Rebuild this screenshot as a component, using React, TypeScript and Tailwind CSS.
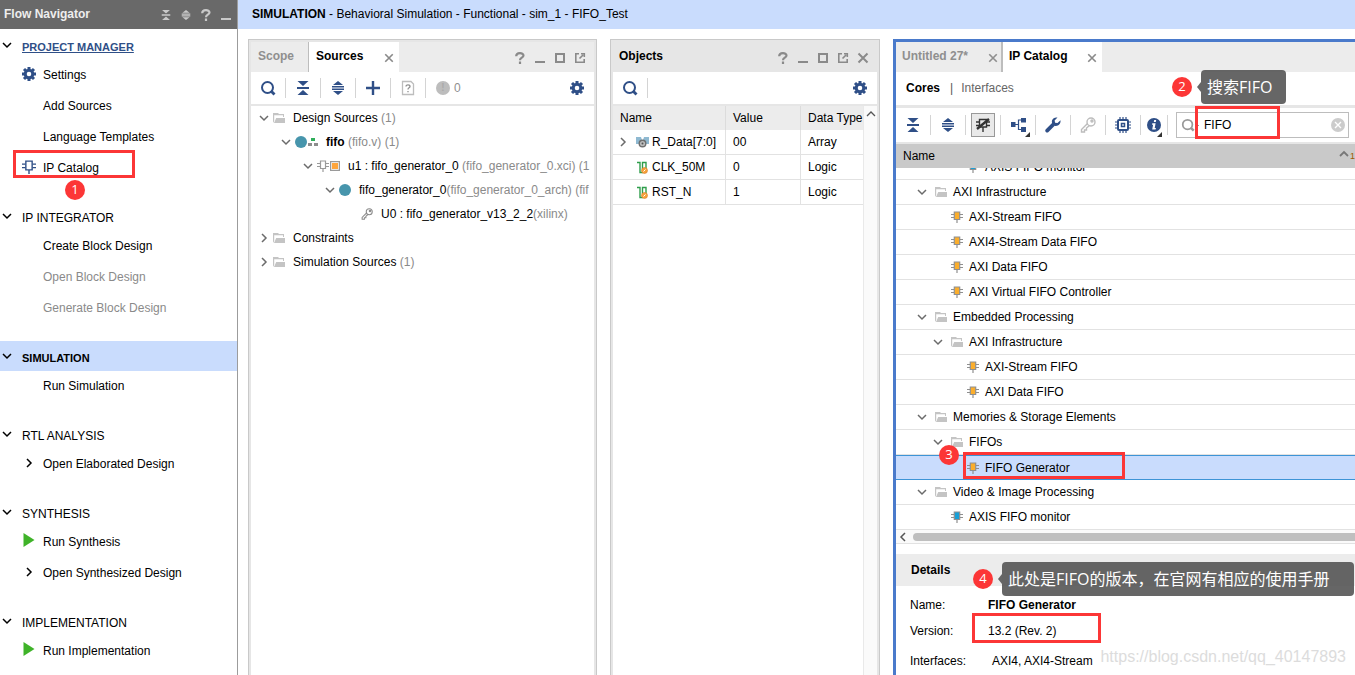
import React from 'react';

type IconProps = { className?: string };

const Chevron: React.FC<{ open?: boolean; className?: string }> = ({ open, className = 'text-[#6b6b6b]' }) => (
  <svg viewBox="0 0 14 14" className={`size-3.5 shrink-0 ${className}`} fill="none" stroke="currentColor" strokeWidth="1.5">
    {open ? <path d="M3 5l4 4 4-4" /> : <path d="M5 3l4 4-4 4" />}
  </svg>
);

const Gear: React.FC<IconProps> = ({ className = '' }) => (
  <svg viewBox="0 0 14 14" className={`size-3.5 shrink-0 text-[#2f4f87] ${className}`} fill="none" stroke="currentColor">
    <circle cx="7" cy="7" r="3.8" strokeWidth="3" />
    <g strokeWidth="3">
      <path d="M7 0v2.5M7 11.5V14M0 7h2.5M11.5 7H14" />
      <path d="M2 2l1.8 1.8M10.2 10.2L12 12M12 2l-1.8 1.8M3.8 10.2L2 12" />
    </g>
  </svg>
);

const Search: React.FC<IconProps> = ({ className = 'size-4 text-[#2f4f87]' }) => (
  <svg viewBox="0 0 16 16" className={`shrink-0 ${className}`} fill="none" stroke="currentColor">
    <circle cx="7.5" cy="7.5" r="5.5" strokeWidth="2" />
    <path d="M11 11l3.5 3.5" strokeWidth="2.8" />
  </svg>
);

const CollapseAll: React.FC<IconProps> = ({ className = 'size-3.5 text-[#2f4f87]' }) => (
  <svg viewBox="0 0 14 14" className={`shrink-0 ${className}`} fill="currentColor">
    <path d="M1.500 0h11L7 5zM1 6h12v2H1zM7 9l5.500 5h-11z" />
  </svg>
);

const ExpandAll: React.FC<IconProps> = ({ className = 'size-3.5 text-[#2f4f87]' }) => (
  <svg viewBox="0 0 14 14" className={`shrink-0 ${className}`} fill="currentColor">
    <path d="M7 0l5 4H2zM1 5h12v1.600H1zM1 7.500h12v1.600H1zM2 10h10l-5 4z" />
  </svg>
);

const Plus: React.FC = () => (
  <svg viewBox="0 0 14 14" className="size-3.5" fill="none" stroke="#2f4f87" strokeWidth="2.4">
    <path d="M7 0v14M0 7h14" />
  </svg>
);

const DocHelp: React.FC = () => (
  <svg viewBox="0 0 14 16" className="h-4 w-3.5" fill="none" stroke="#bdbdbd" strokeWidth="1.3">
    <path d="M1.500 1.500H10l2.500 2.500v10.500h-11z" />
    <path d="M5 6.500c0-2.300 4-2.300 4 0 0 1.400-2 1.300-2 3M7 11v1.300" stroke="#8f8f8f" />
  </svg>
);

const Folder: React.FC = () => (
  <svg viewBox="0 0 12 12" className="size-3 shrink-0" fill="#c4c4c4">
    <path d="M0 1h5l1 1h5v3h-1V3.200H1.200V9L0 11z" />
    <path d="M3.200 6H12v5H1z" />
  </svg>
);

const Chip: React.FC<{ fill?: string; line?: string; className?: string }> = ({ fill = 'none', line = '#8f8f8f', className = 'size-3' }) => (
  <svg viewBox="0 0 12 12" className={`shrink-0 ${className}`} fill="none" stroke={line} strokeWidth="1.2">
    <path d="M0 3.500h3M0 6.500h3M9 3.500h3M9 6.500h3M6 8.500V12" />
    <path d="M3.300 1h5.400v7.500H3.300z" fill={fill} />
  </svg>
);

const ChipOff: React.FC = () => (
  <svg viewBox="0 0 14 14" className="size-3.5" fill="none" stroke="#333" strokeWidth="1.400">
    <path d="M0 4h3M0 7.500h3M11 4h3M11 7.500h3M7 9v5M3.500 1.500h7V9h-7z" />
    <path d="M1 11L13 1" strokeWidth="2.400" />
  </svg>
);

const Hierarchy: React.FC = () => (
  <svg viewBox="0 0 16 16" className="size-4" fill="#2f4f87">
    <path d="M1 5h4.500v5H1zM11 1h5v4.500h-5zM11 10h5v5h-5z" />
    <path d="M5 7.500h3M13 3H8.500v9.500H13" fill="none" stroke="#2f4f87" strokeWidth="1.200" />
  </svg>
);

const Wrench: React.FC = () => (
  <svg viewBox="0 0 16 16" className="size-4" fill="#2f4f87">
    <path d="M15.500 3.300l-3 2.800-2.400-.3-.5-2.300L12.500.6C10.300.1 7.800 1 7 3.500c-.3 1 0 1.800.1 2.600L.8 12.300c-.8.8-.7 1.900 0 2.600.8.800 1.900.800 2.700 0l6.200-6.200c3.300.9 6.300-1.700 5.800-5.400z" />
  </svg>
);

const Key: React.FC<IconProps> = ({ className = 'size-4 text-[#bcbcbc]' }) => (
  <svg viewBox="0 0 16 16" className={`shrink-0 ${className}`} fill="none" stroke="currentColor" strokeWidth="1.400">
    <circle cx="11" cy="5" r="4" />
    <circle cx="12" cy="4" r="1" />
    <path d="M7.500 6.500L1.500 12.500V15h3v-2H6.500v-2L9.500 8.500" />
  </svg>
);

const Processor: React.FC = () => (
  <svg viewBox="0 0 16 16" className="size-4" fill="none" stroke="#2f4f87">
    <rect x="3" y="3" width="10" height="10" rx="1" strokeWidth="2" />
    <rect x="6.500" y="6.500" width="3" height="3" strokeWidth="1.500" />
    <path d="M5 0v3M8 0v3M11 0v3M5 13v3M8 13v3M11 13v3M0 5h3M0 8h3M0 11h3M13 5h3M13 8h3M13 11h3" strokeWidth="1.200" />
  </svg>
);

const Info: React.FC = () => (
  <svg viewBox="0 0 16 16" className="size-4">
    <circle cx="8" cy="8" r="7" fill="#2f4f87" />
    <path d="M8.200 3h2l-.4 2h-2zM6.300 6.300h3.300L8.700 11h1.200l-.3 1.400H6.200l.9-4.700H6z" fill="#fff" />
  </svg>
);

const Help: React.FC = () => (
  <svg viewBox="0 0 10 12" className="h-3 w-2.5" fill="none" stroke="currentColor" strokeWidth="2.200">
    <path d="M1.200 4.200c0-4 7.300-4 7.300-.6C8.500 5.800 5 5.600 5 8.200M5 9.600V12" />
  </svg>
);

const Minimize: React.FC = () => (
  <svg viewBox="0 0 12 12" className="size-3" fill="currentColor"><path d="M1 9h10v2H1z" /></svg>
);

const Maximize: React.FC = () => (
  <svg viewBox="0 0 12 12" className="size-3" fill="none" stroke="currentColor" strokeWidth="2">
    <path d="M2 2h8v8H2z" />
  </svg>
);

const PopOut: React.FC = () => (
  <svg viewBox="0 0 12 12" className="size-3" fill="none" stroke="currentColor" strokeWidth="1.600">
    <path d="M5 1.800H1.800v8.400h8.400V7M5.500 6.500L9 3M7 1.700h3.300V5" />
  </svg>
);

const Close: React.FC<{ className?: string }> = ({ className = 'size-3' }) => (
  <svg viewBox="0 0 12 12" className={className} fill="none" stroke="currentColor" strokeWidth="2">
    <path d="M1.500 1.500l9 9M10.500 1.500l-9 9" />
  </svg>
);

const Play: React.FC = () => (
  <svg viewBox="0 0 12 14" className="mb-0.5 h-3.5 w-3" fill="#3fb329"><path d="M.5 0L11.500 7 .5 14z" /></svg>
);

const Module: React.FC = () => (
  <svg viewBox="0 0 12 12" className="size-3 shrink-0" fill="#4795ac"><circle cx="6" cy="6" r="6" /></svg>
);

const TopModule: React.FC = () => (
  <svg viewBox="0 0 23 12" className="h-3 w-[23px] shrink-0">
    <circle cx="6" cy="6" r="6" fill="#4795ac" />
    <path d="M16 2h4v3h-4z" fill="#2fae5a" />
    <path d="M13 7h4v3h-4zM19 7h4v3h-4z" fill="#8d8d8d" />
  </svg>
);

const IpInstance: React.FC = () => (
  <svg viewBox="0 0 23 12" className="h-3 w-[23px] shrink-0" fill="none" stroke="#9a9a9a" strokeWidth="1.200">
    <path d="M0 3.500h3M0 6.500h3M9 3.500h3M9 6.500h3M6 8.500V12M3.500 1h5v7.500h-5z" />
    <path d="M13.600 1.600h8.800v8.800h-8.800z" />
    <path d="M15.500 3.500h5v5h-5z" fill="#ffa63d" stroke="#ffa63d" />
  </svg>
);

const BusSignal: React.FC = () => (
  <svg viewBox="0 0 13 12" className="h-3 w-[13px] shrink-0">
    <path d="M0 1h5l1 3h1l1-3h5v7H0z" fill="#8fb9d1" />
    <circle cx="6.500" cy="7.500" r="3.300" fill="#bbb" stroke="#6f6f6f" strokeWidth="1.400" />
    <circle cx="6.500" cy="7.500" r="1" fill="#555" />
  </svg>
);

const Signal: React.FC = () => (
  <svg viewBox="0 0 13 13" className="size-[13px] shrink-0" fill="none">
    <path d="M1 1.500h3v10h3M6.500 8V1.500H10V8" stroke="#2f9e4b" strokeWidth="1.400" />
    <circle cx="8.500" cy="9.500" r="3" fill="#f7a23b" stroke="#d9822b" strokeWidth=".6" />
    <path d="M7.500 10.500l2-2" stroke="#fff" />
  </svg>
);

const IconCell: React.FC<{ label: string; children: React.ReactNode }> = ({ label, children }) => (
  <div className="flex h-5 w-[35px] shrink-0 border-r border-[#d4d4d4]">
    <button aria-label={label} className="flex flex-1 items-center justify-center">{children}</button>
  </div>
);

const WindowButtons: React.FC<{ closable?: boolean }> = ({ closable }) => (
  <div className="ml-auto flex pr-1 pt-0.5 text-[#8a8a8a]">
    <button aria-label="Help" className="flex w-5 justify-center"><Help /></button>
    <button aria-label="Minimize" className="flex w-5 justify-center"><Minimize /></button>
    <button aria-label="Maximize" className="flex w-5 justify-center"><Maximize /></button>
    <button aria-label="Float" className="flex w-5 justify-center"><PopOut /></button>
    {closable && <button aria-label="Close" className="flex w-5 justify-center"><Close /></button>}
  </div>
);

const Badge: React.FC<{ n: number; className: string }> = ({ n, className }) => (
  <span className={`absolute z-20 flex size-5 items-center justify-center rounded-full bg-[#fc3636] font-['Open_Sans',sans-serif] text-[13px] text-white ${className}`}>
    {n}
  </span>
);

const Callout: React.FC<{ text: string; className: string }> = ({ text, className }) => (
  <div className={`absolute z-20 flex h-[34px] items-center whitespace-nowrap rounded-sm bg-[#555]/90 pl-1.5 font-['Open_Sans','Noto_Sans_CJK_SC',sans-serif] text-base text-white ${className}`}>
    <span className="absolute -left-1 top-3 border-y-5 border-r-4 border-y-transparent border-r-[#666]" />
    {text}
  </div>
);

type NavItem = { label: string; icon?: React.ReactNode; disabled?: boolean; marked?: boolean };
type NavSection = { title: string; items: NavItem[]; link?: boolean; active?: boolean };

const sections: NavSection[] = [
  {
    title: 'PROJECT MANAGER',
    link: true,
    items: [
      { label: 'Settings', icon: <Gear /> },
      { label: 'Add Sources' },
      { label: 'Language Templates' },
      { label: 'IP Catalog', icon: <Chip line="#2f4f87" className="size-3.5" />, marked: true },
    ],
  },
  {
    title: 'IP INTEGRATOR',
    items: [
      { label: 'Create Block Design' },
      { label: 'Open Block Design', disabled: true },
      { label: 'Generate Block Design', disabled: true },
    ],
  },
  { title: 'SIMULATION', active: true, items: [{ label: 'Run Simulation' }] },
  { title: 'RTL ANALYSIS', items: [{ label: 'Open Elaborated Design', icon: <Chevron className="text-black" /> }] },
  {
    title: 'SYNTHESIS',
    items: [
      { label: 'Run Synthesis', icon: <Play /> },
      { label: 'Open Synthesized Design', icon: <Chevron className="text-black" /> },
    ],
  },
  { title: 'IMPLEMENTATION', items: [{ label: 'Run Implementation', icon: <Play /> }] },
];

const FlowNavigator: React.FC = () => (
  <aside className="w-[238px] shrink-0 border-r border-[#9c9c9c]">
    <header className="flex h-[29px] items-center bg-[#696969] pl-1 pr-px text-[#c9c9c9]">
      <h2 className="pb-0.5 text-xs font-bold text-[#eee]">Flow Navigator</h2>
      <div className="ml-auto flex items-center">
        <button aria-label="Collapse all" className="flex w-5 justify-center"><CollapseAll className="size-2.5" /></button>
        <button aria-label="Expand all" className="flex w-5 justify-center"><ExpandAll className="size-2.5" /></button>
        <button aria-label="Help" className="flex w-5 justify-center"><Help /></button>
        <button aria-label="Minimize" className="flex w-5 justify-center"><Minimize /></button>
      </div>
    </header>
    <nav className="flex flex-col gap-[17px] pt-px">
      {sections.map((section) => (
        <section key={section.title}>
          <h3 className={`flex h-[30px] items-center pt-1 ${section.active ? 'bg-[#c9dcfd] text-[11px] font-bold' : ''}`}>
            <Chevron open className="mb-1 mr-2 text-black" />
            {section.link ? <a href="#" className="text-[11px] font-bold text-[#2f4f87] underline">{section.title}</a> : section.title}
          </h3>
          <ul>
            {section.items.map((item) => (
              <li key={item.label} className="relative flex h-[31px] items-center pb-0.5">
                <button disabled={item.disabled} className="flex items-center disabled:text-[#8a8a8a]">
                  <span className="ml-[22px] mr-[7px] flex w-3.5 justify-center pb-0.5">{item.icon}</span>
                  {item.label}
                </button>
                {item.marked && (
                  <>
                    <span className="absolute -top-[3px] left-[13px] h-7 w-[122px] border-3 border-[#fc3636]" />
                    <Badge n={1} className="left-[65px] top-[27px]" />
                  </>
                )}
              </li>
            ))}
          </ul>
        </section>
      ))}
    </nav>
  </aside>
);

type SourceRow = { indent: string; icon: React.ReactNode; name: string; note?: string; open?: boolean; leaf?: boolean; bold?: boolean };

const sources: SourceRow[] = [
  { indent: 'pl-1.5', icon: <Folder />, name: 'Design Sources', note: ' (1)', open: true },
  { indent: 'pl-7', icon: <TopModule />, name: 'fifo', note: ' (fifo.v) (1)', open: true, bold: true },
  { indent: 'pl-[50px]', icon: <IpInstance />, name: 'u1 : fifo_generator_0', note: ' (fifo_generator_0.xci) (1', open: true },
  { indent: 'pl-[72px]', icon: <Module />, name: 'fifo_generator_0', note: '(fifo_generator_0_arch) (fif', open: true },
  { indent: 'pl-[94px]', icon: <Key className="size-3 text-[#8a8a8a]" />, name: 'U0 : fifo_generator_v13_2_2', note: '(xilinx)', leaf: true },
  { indent: 'pl-1.5', icon: <Folder />, name: 'Constraints' },
  { indent: 'pl-1.5', icon: <Folder />, name: 'Simulation Sources', note: ' (1)' },
];

const SourcesPanel: React.FC = () => (
  <section className="flex w-[349px] shrink-0 border border-b-0 border-[#c9c9c9]">
    <div className="flex min-w-0 flex-1 flex-col border-2 border-b-0 border-[#e6e6e6] bg-white">
      <div className="flex h-[30px] items-center bg-[#ececec]">
        <button className="w-[57px] pb-0.5 pl-[7px] text-left font-bold text-[#8f8f8f]">Scope</button>
        <div className="flex h-full w-[91px] items-center border-l border-[#bdbdbd] bg-white pl-[7px]">
          <span className="flex-1 pb-0.5 font-bold">Sources</span>
          <button aria-label="Close Sources" className="pr-[5px] pt-0.5 text-[#8a8a8a]"><Close className="size-2.5" /></button>
        </div>
        <WindowButtons />
      </div>
      <div className="flex h-[34px] items-center border-b-2 border-[#e6e6e6]">
        <IconCell label="Search"><Search /></IconCell>
        <IconCell label="Collapse all"><CollapseAll /></IconCell>
        <IconCell label="Expand all"><ExpandAll /></IconCell>
        <IconCell label="Add sources"><Plus /></IconCell>
        <IconCell label="Properties"><DocHelp /></IconCell>
        <div className="flex items-center gap-1 pl-2.5 text-[#8f8f8f]">
          <span className="flex size-3.5 items-center justify-center rounded-full bg-[#bdbdbd] text-[10px] font-bold text-[#aaa]">!</span>
          0
        </div>
        <button aria-label="Settings" className="ml-auto pr-2.5"><Gear /></button>
      </div>
      <ul>
        {sources.map((row) => (
          <li key={row.name} className={`flex h-6 items-center overflow-hidden whitespace-pre ${row.indent}`}>
            {row.leaf ? <span className="w-3.5" /> : <Chevron open={row.open} />}
            <span className="ml-0.5 mr-2 flex shrink-0">{row.icon}</span>
            <span className={row.bold ? 'font-bold' : ''}>{row.name}</span>
            <span className="text-[#8a8a8a]">{row.note}</span>
          </li>
        ))}
      </ul>
    </div>
  </section>
);

const objects = [
  { name: 'R_Data[7:0]', value: '00', type: 'Array', bus: true },
  { name: 'CLK_50M', value: '0', type: 'Logic' },
  { name: 'RST_N', value: '1', type: 'Logic' },
];

const ObjectsPanel: React.FC = () => (
  <section className="flex w-[270px] shrink-0 border border-b-0 border-[#c9c9c9]">
    <div className="flex min-w-0 flex-1 flex-col border-2 border-b-0 border-[#e6e6e6] bg-white">
      <div className="flex h-[30px] items-center bg-[#e6e6e6]">
        <h2 className="pb-0.5 pl-1.5 font-bold">Objects</h2>
        <WindowButtons closable />
      </div>
      <div className="flex h-[34px] items-center border-b-2 border-[#e6e6e6]">
        <IconCell label="Search"><Search /></IconCell>
        <button aria-label="Settings" className="ml-auto pr-2.5"><Gear /></button>
      </div>
      <div className="flex flex-1">
        <div className="flex-1">
          <table className="w-full table-fixed border-separate border-spacing-0 text-left">
            <colgroup>
              <col className="w-[113px]" />
              <col className="w-[75px]" />
              <col />
            </colgroup>
            <thead>
              <tr className="h-6 bg-[#ececec]">
                <th className="border-r border-[#dcdcdc] pl-[7px] font-normal">Name</th>
                <th className="border-r border-[#dcdcdc] pl-[7px] font-normal">Value</th>
                <th className="whitespace-nowrap pl-[7px] font-normal">Data Type</th>
              </tr>
            </thead>
            <tbody>
              {objects.map((o) => (
                <tr key={o.name} className="h-[25px]">
                  <td className="border-b border-r border-[#e2e2e2]">
                    <div className="flex items-center pl-[3px]">
                      {o.bus ? <Chevron /> : <span className="w-3.5" />}
                      <span className="ml-1.5 mr-[3px] flex">{o.bus ? <BusSignal /> : <Signal />}</span>
                      {o.name}
                    </div>
                  </td>
                  <td className="border-b border-r border-[#e2e2e2] pl-[7px]">{o.value}</td>
                  <td className="border-b border-[#e2e2e2] pl-[7px]">{o.type}</td>
                </tr>
              ))}
            </tbody>
          </table>
        </div>
        <div className="flex w-3.5 justify-center border-l border-[#e9e9e9] bg-[#fafafa] pt-1 text-[#555]">
          <svg viewBox="0 0 10 8" className="h-2 w-2.5" fill="none" stroke="currentColor" strokeWidth="1.300"><path d="M1 6l4-4 4 4" /></svg>
        </div>
      </div>
    </div>
  </section>
);

type Core = { indent: string; name: string; folder?: boolean; fill?: string; selected?: boolean };

const cores: Core[] = [
  { indent: 'pl-[51px]', name: 'AXIS FIFO monitor', fill: '#18a0d8' },
  { indent: 'pl-[19px]', name: 'AXI Infrastructure', folder: true },
  { indent: 'pl-[35px]', name: 'AXI-Stream FIFO' },
  { indent: 'pl-[35px]', name: 'AXI4-Stream Data FIFO' },
  { indent: 'pl-[35px]', name: 'AXI Data FIFO' },
  { indent: 'pl-[35px]', name: 'AXI Virtual FIFO Controller' },
  { indent: 'pl-[19px]', name: 'Embedded Processing', folder: true },
  { indent: 'pl-[35px]', name: 'AXI Infrastructure', folder: true },
  { indent: 'pl-[51px]', name: 'AXI-Stream FIFO' },
  { indent: 'pl-[51px]', name: 'AXI Data FIFO' },
  { indent: 'pl-[19px]', name: 'Memories & Storage Elements', folder: true },
  { indent: 'pl-[35px]', name: 'FIFOs', folder: true },
  { indent: 'pl-[51px]', name: 'FIFO Generator', selected: true },
  { indent: 'pl-[19px]', name: 'Video & Image Processing', folder: true },
  { indent: 'pl-[35px]', name: 'AXIS FIFO monitor', fill: '#18a0d8' },
];

const CoreTree: React.FC = () => (
  <ul className="flex h-[362px] shrink-0 flex-col justify-end overflow-hidden">
    {cores.map((core, i) => (
      <li
        key={i}
        className={`relative flex h-[25px] shrink-0 items-center ${core.indent} ${
          core.selected ? 'border-y border-[#3d94d6] bg-[#c9dcfd]' : 'border-b border-[#e2e2e2]'
        }`}
      >
        {core.folder ? <Chevron open /> : <span className="w-3.5" />}
        <span className="mx-1.5 flex">{core.folder ? <Folder /> : <Chip fill={core.fill ?? '#fbae2c'} />}</span>
        {core.name}
        {core.selected && (
          <>
            <span className="absolute -top-1 left-[67px] h-[27px] w-[162px] border-3 border-[#fc3636]" />
            <Badge n={3} className="-top-[11px] left-[43px]" />
          </>
        )}
      </li>
    ))}
  </ul>
);

const CatalogPanel: React.FC = () => (
  <section className="flex min-w-0 flex-1 flex-col border-l-3 border-t-3 border-[#4a7acb] bg-white">
    <div className="flex h-[30px] shrink-0 bg-[#ececec]">
      <div className="flex w-[107px] items-center border-r-2 border-[#bdbdbd] pl-1.5 text-[#8f8f8f]">
        <span className="flex-1 pb-0.5 font-bold">Untitled 27*</span>
        <button aria-label="Close Untitled 27" className="pr-[3px] pt-0.5"><Close className="size-2.5" /></button>
      </div>
      <div className="flex w-[99px] items-center bg-white pl-1.5">
        <span className="flex-1 pb-0.5 font-bold">IP Catalog</span>
        <button aria-label="Close IP Catalog" className="pr-[5px] pt-0.5 text-[#8a8a8a]"><Close className="size-2.5" /></button>
      </div>
    </div>
    <div className="relative flex h-9 shrink-0 items-center border-b-3 border-[#e6e6e6] pl-2.5">
      <button className="pb-0.5 font-bold">Cores</button>
      <span className="ml-2.5 mr-2 pb-0.5 text-[#555]">|</span>
      <button className="pb-0.5 text-[#666]">Interfaces</button>
      <Badge n={2} className="left-[276px] top-[5px]" />
      <Callout text="搜索FIFO" className="-top-0.5 left-[305px] w-[85px]" />
    </div>
    <div className="flex h-9 shrink-0 items-center border-b-2 border-[#e6e6e6]">
      <IconCell label="Collapse all"><CollapseAll /></IconCell>
      <IconCell label="Expand all"><ExpandAll /></IconCell>
      <IconCell label="Hide incompatible">
        <span className="flex size-6 shrink-0 items-center justify-center border border-[#999] bg-[#e9e9e9]"><ChipOff /></span>
      </IconCell>
      <IconCell label="Group by"><span className="relative"><Hierarchy /><span className="absolute -bottom-1 -right-1 border-b-5 border-l-5 border-b-[#333] border-l-transparent" /></span></IconCell>
      <IconCell label="Customize"><Wrench /></IconCell>
      <IconCell label="License"><Key /></IconCell>
      <IconCell label="Processor"><Processor /></IconCell>
      <div className="flex h-5 w-[27px] shrink-0 border-r border-[#d4d4d4]">
        <button aria-label="Information" className="flex flex-1 items-center justify-center">
          <span className="relative"><Info /><span className="absolute -bottom-1 right-0 border-b-5 border-l-5 border-b-[#333] border-l-transparent" /></span>
        </button>
      </div>
      <label className="relative ml-2 mr-1.5 flex h-[26px] min-w-0 flex-1 items-center border border-[#bdbdbd] pl-1 pr-[3px]">
        <Search className="size-3.5 text-[#999]" />
        <span className="h-px w-1 bg-[#999]" />
        <input aria-label="Search cores" defaultValue="FIFO" className="min-w-0 flex-1 pl-[5px] outline-none" />
        <button aria-label="Clear search" className="flex size-3.5 items-center justify-center rounded-full bg-[#ccc] text-white">
          <Close className="size-2" />
        </button>
        <span className="absolute -top-[7px] left-[18px] h-[33px] w-[85px] border-3 border-[#fc3636]" />
      </label>
    </div>
    <div className="flex h-6 shrink-0 items-center bg-[#c9c9c9] pl-[7px]">
      Name
      <svg viewBox="0 0 10 8" className="mb-1 ml-auto h-2 w-2.5" fill="none" stroke="#777" strokeWidth="1.800"><path d="M1 6l4-4 4 4" /></svg>
      <span className="w-[6px] pl-px text-[9px] text-[#a05a00]">1</span>
    </div>
    <CoreTree />
    <div className="flex h-3.5 shrink-0 items-center border-b border-[#e2e2e2] bg-[#fafafa]">
      <svg viewBox="0 0 8 10" className="ml-[3px] mr-1.5 h-2.5 w-2" fill="none" stroke="#555" strokeWidth="1.500"><path d="M6 1L2 5l4 4" /></svg>
      <span className="h-2 flex-1 rounded-l-full bg-[#bfbfbf]" />
    </div>
    <div className="relative mt-2.5 flex h-8 shrink-0 items-center bg-[#ececec] pl-[15px]">
      <h2 className="font-bold">Details</h2>
      <Badge n={4} className="left-[77px] top-[15px]" />
      <Callout text="此处是FIFO的版本，在官网有相应的使用手册" className="left-[106px] top-2 w-[352px]" />
    </div>
    <dl className="pl-3.5 pt-1.5">
      <div className="flex h-[26px] items-center">
        <dt className="w-[78px]">Name:</dt>
        <dd className="font-bold">FIFO Generator</dd>
      </div>
      <div className="relative flex h-[26px] items-center">
        <dt className="w-[78px]">Version:</dt>
        <dd>13.2 (Rev. 2)</dd>
        <span className="absolute -top-[5px] left-[62px] h-[30px] w-[129px] border-3 border-[#fc3636]" />
      </div>
      <div className="flex h-[34px] items-center">
        <dt className="w-[82px]">Interfaces:</dt>
        <dd>AXI4, AXI4-Stream</dd>
      </div>
    </dl>
  </section>
);

const App: React.FC = () => {
  return (
    <div className="relative flex h-screen overflow-hidden bg-white font-['Liberation_Sans',Arial,sans-serif] text-xs text-black">
      <FlowNavigator />
      <div className="flex min-w-0 flex-1 flex-col">
        <header className="flex h-[29px] shrink-0 items-center whitespace-pre bg-[#c9dcfd] pb-0.5 pl-3.5">
          <strong>SIMULATION</strong> - Behavioral Simulation - Functional - sim_1 - FIFO_Test
        </header>
        <main className="flex min-h-0 flex-1 gap-[13px] pl-2.5 pt-2.5">
          <SourcesPanel />
          <ObjectsPanel />
          <CatalogPanel />
        </main>
      </div>
      <p className="absolute bottom-1.5 right-[9px] text-base text-[#dcdcdc]">https://blog.csdn.net/qq_40147893</p>
    </div>
  );
};

export default App;
